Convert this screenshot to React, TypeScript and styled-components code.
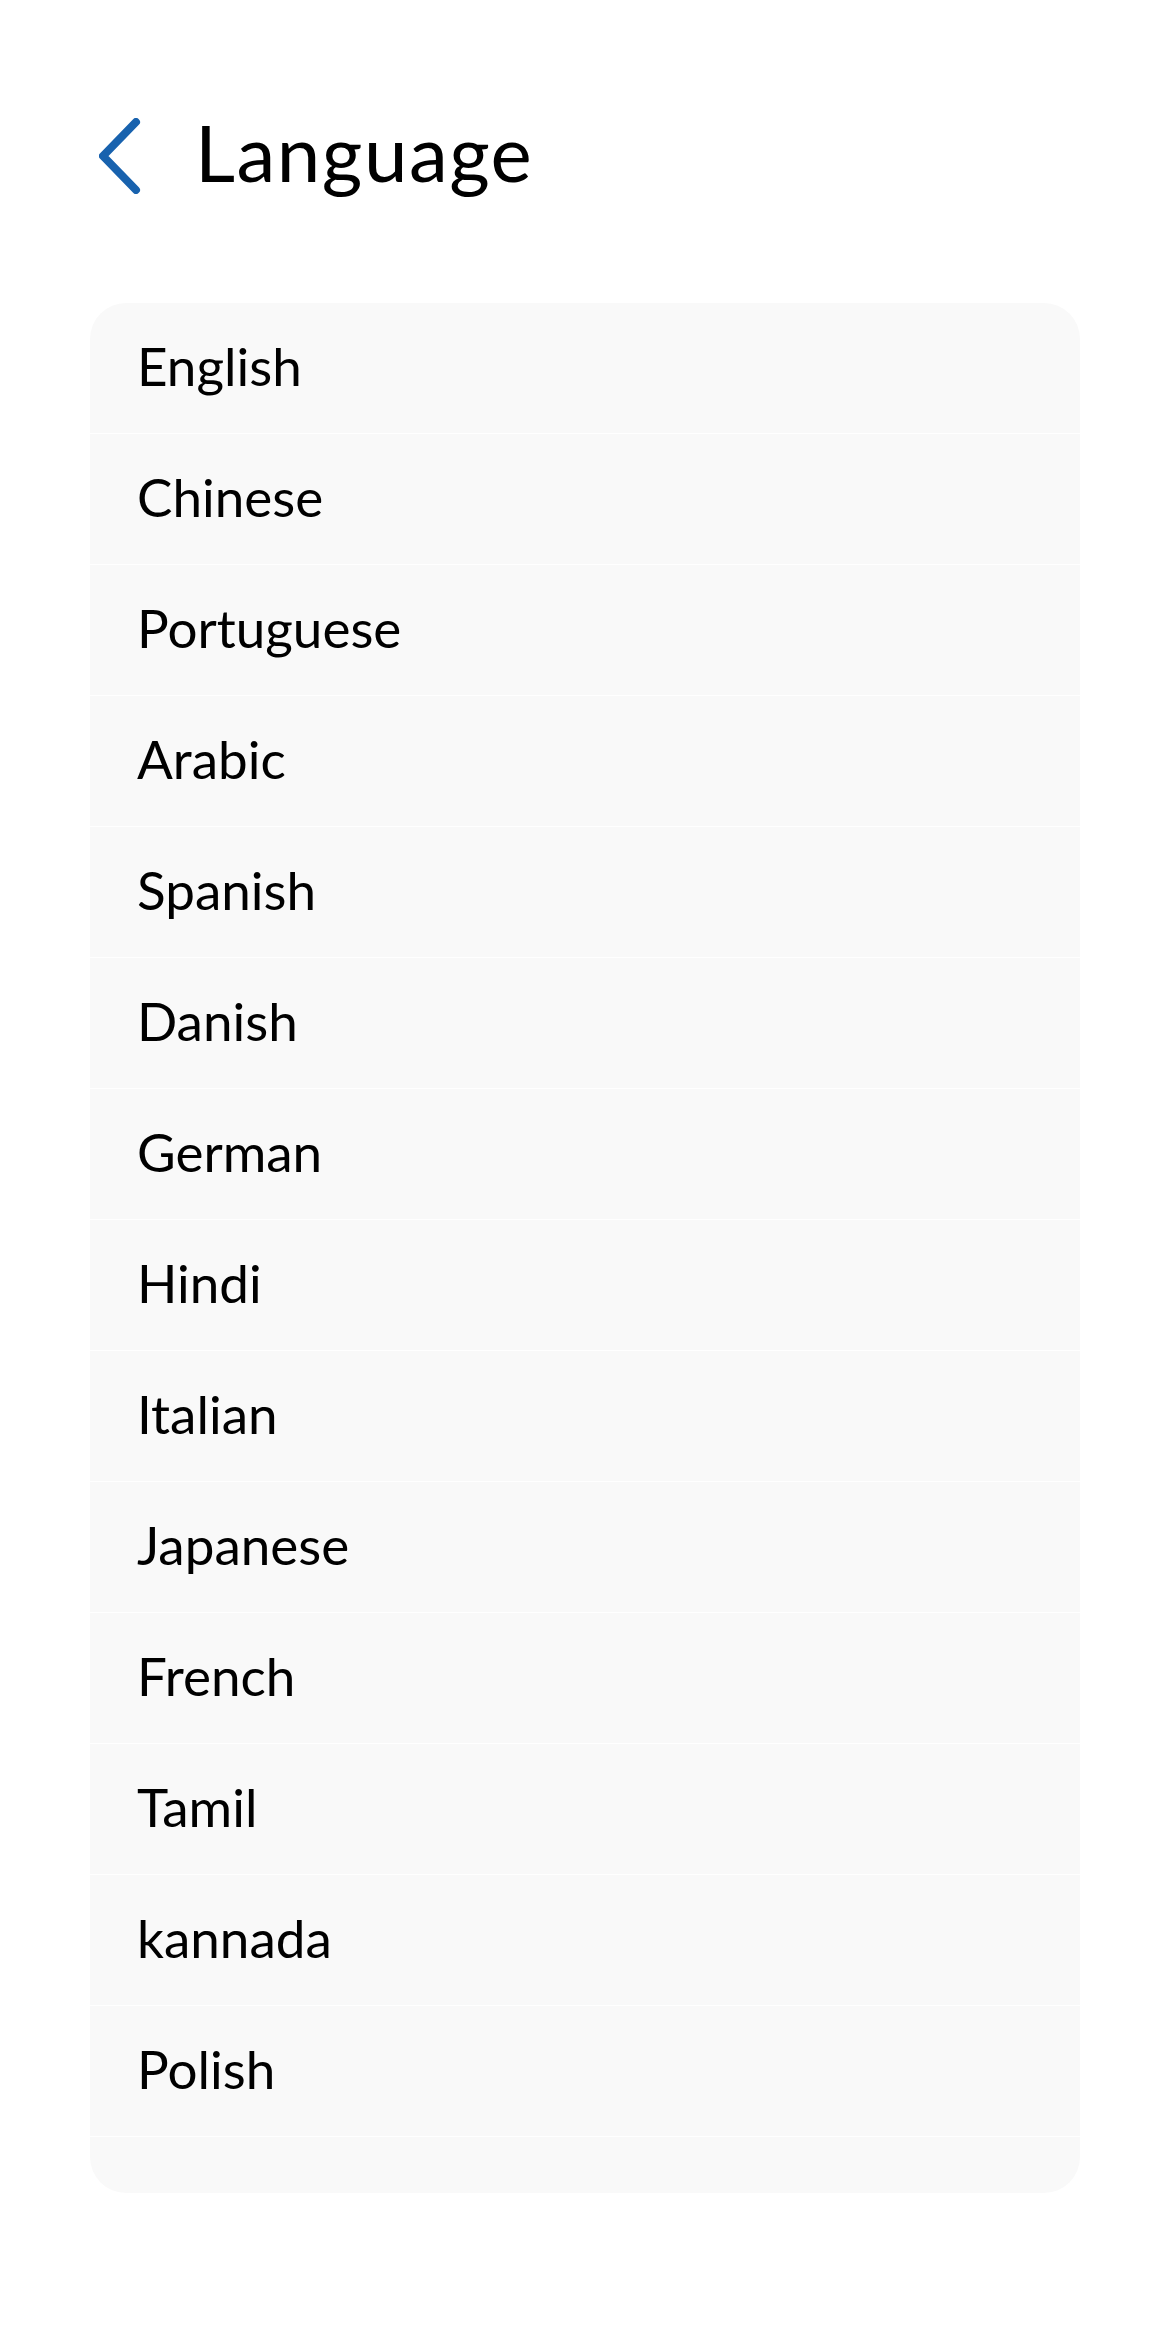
import React from "react";
import styled, { createGlobalStyle } from "styled-components";

const languages = [
  "English",
  "Chinese",
  "Portuguese",
  "Arabic",
  "Spanish",
  "Danish",
  "German",
  "Hindi",
  "Italian",
  "Japanese",
  "French",
  "Tamil",
  "kannada",
  "Polish",
];

const GlobalStyle = createGlobalStyle`
  body {
    margin: 0;
    background: #ffffff;
    font-family: Lato, "Liberation Sans", sans-serif;
    color: #000000;
  }
`;

export default function App() {
  return (
    <>
      <GlobalStyle />
      <Page>
        <Header>
          <BackButton aria-label="Back">
            <svg width="44" height="76" viewBox="0 0 44 76">
              <path
                d="M37 4 L4 38 L37 72"
                fill="none"
                stroke="#1862ae"
                strokeWidth="8"
                strokeLinecap="round"
                strokeLinejoin="round"
              />
            </svg>
          </BackButton>
          <Title>Language</Title>
        </Header>

        <LanguageCard>
          {languages.map((lang) => (
            <LanguageRow key={lang}>
              <LanguageName>{lang}</LanguageName>
            </LanguageRow>
          ))}
        </LanguageCard>
      </Page>
    </>
  );
}

const Page = styled.div`
  width: 1170px;
  min-height: 2329px;
  padding-top: 118px;
  box-sizing: border-box;
`;

const Header = styled.div`
  display: flex;
  align-items: center;
  height: 76px;
  padding-left: 99px;
  gap: 52px;
`;

const BackButton = styled.div`
  display: flex;
  align-items: center;
  width: 44px;
  height: 76px;
`;

const Title = styled.h1`
  margin: 0;
  font-size: 78px;
  font-weight: 400;
  line-height: 1;
  letter-spacing: 1.5px;
  margin-top: -8px;
`;

const LanguageCard = styled.div`
  margin: 109px 90px 0;
  background: #f9f9f9;
  border-radius: 36px;
  padding-bottom: 56px;
  overflow: hidden;
`;

const LanguageRow = styled.div`
  display: flex;
  align-items: center;
  height: 130px;
  padding-left: 47px;
  border-bottom: 1px solid #ffffff;
`;

const LanguageName = styled.span`
  font-size: 53px;
  font-weight: 400;
  line-height: 1;
  margin-top: -5px;
`;
